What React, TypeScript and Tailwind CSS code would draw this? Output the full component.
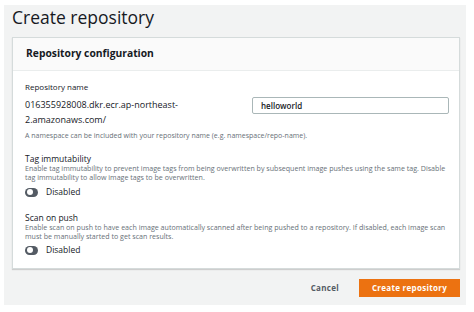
import React from "react";

function Toggle() {
  return (
    <div className="flex items-center gap-[8px]">
      <div className="relative w-[13px] h-[9px] rounded-full bg-[#545b64]">
        <div className="absolute left-[1.5px] top-[1.5px] w-[6px] h-[6px] rounded-full bg-white" />
      </div>
      <span className="text-[8.5px] text-[#16191f]">Disabled</span>
    </div>
  );
}

export default function App() {
  return (
    <div
      className="w-[474px] h-[312px] bg-white pt-[5px] pl-[4px]"
      style={{ fontFamily: '"Open Sans", "Noto Sans", sans-serif' }}
    >
      <div className="w-[462px] h-[300px] bg-[#f2f3f3] flex flex-col">
        <h1 className="ml-[8px] h-[32px] text-[17.5px] leading-[24px] text-[#16191f]">
          Create repository
        </h1>
        <div className="ml-[8px] w-[448px] bg-white border border-[#d5dbdb] shadow-[0_1px_1px_rgba(0,0,0,0.15)]">
          <div className="h-[33px] bg-[#fafafa] border-b border-[#eaeded] flex items-center pl-[13px]">
            <span className="text-[10.3px] font-bold text-[#16191f]">Repository configuration</span>
          </div>
          <div className="pl-[12px] pr-[10px] pt-[10px] pb-[11px]">
            <div className="text-[8px] leading-[12px] text-[#16191f]">Repository name</div>
            <div className="flex items-start mt-[4px]">
              <div className="w-[227px] text-[9px] leading-[15px] text-[#16191f]">
                016355928008.dkr.ecr.ap-northeast-
                <br />
                2.amazonaws.com/
              </div>
              <div className="w-[197px] h-[17px] border border-[#aab7b8] rounded-[2px] flex items-center pl-[8px] text-[8px] font-semibold text-[#16191f]">
                helloworld
              </div>
            </div>
            <div className="mt-[4px] text-[7px] leading-[10px] text-[#687078]">
              A namespace can be included with your repository name (e.g. namespace/repo-name).
            </div>
            <div className="mt-[12px] text-[8.5px] leading-[11px] font-medium text-[#16191f]">Tag immutability</div>
            <div className="text-[7.1px] leading-[9px] text-[#687078]">
              Enable tag immutability to prevent image tags from being overwritten by subsequent image pushes using the same tag. Disable
              <br />
              tag immutability to allow image tags to be overwritten.
            </div>
            <div className="mt-[4px]">
              <Toggle />
            </div>
            <div className="mt-[13px] text-[8.5px] leading-[11px] text-[#16191f]">Scan on push</div>
            <div className="text-[7.1px] leading-[9px] text-[#687078]">
              Enable scan on push to have each image automatically scanned after being pushed to a repository. If disabled, each image scan
              <br />
              must be manually started to get scan results.
            </div>
            <div className="mt-[3px]">
              <Toggle />
            </div>
          </div>
        </div>
        <div className="flex justify-end items-center mt-[10px] mr-[6px] gap-[20px]">
          <span className="text-[8px] font-bold text-[#545b64] tracking-[0.3px]">Cancel</span>
          <div className="w-[101px] h-[18px] bg-[#ec7211] flex items-center justify-center text-[8px] font-bold text-white tracking-[0.3px]">
            Create repository
          </div>
        </div>
      </div>
    </div>
  );
}
